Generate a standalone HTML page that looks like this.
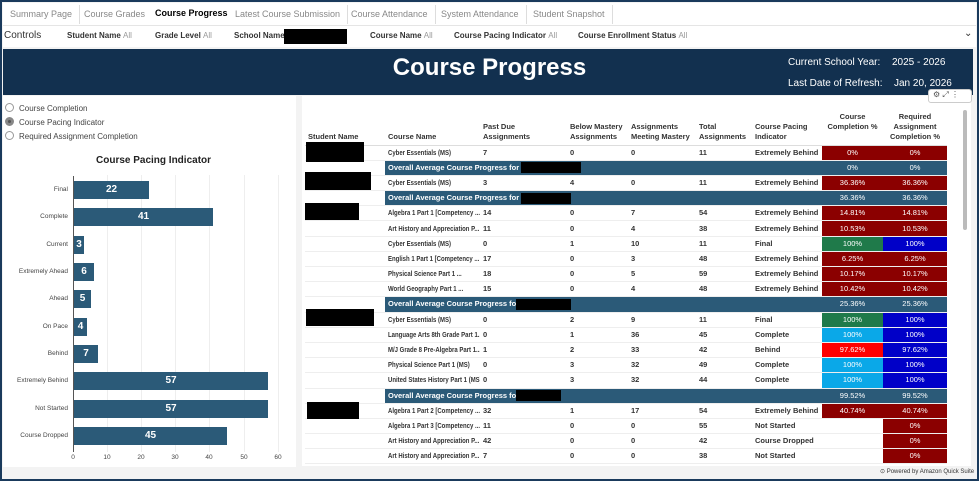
<!DOCTYPE html>
<html><head><style>
*{margin:0;padding:0;box-sizing:border-box}
body{width:979px;height:481px;overflow:hidden;font-family:"Liberation Sans",sans-serif;background:#1a3a5c;position:relative}
.a{position:absolute}
#frame{left:2px;top:2px;width:975px;height:477px;background:#f3f3f3}
.tab{top:5px;height:19px;font-size:9px;color:#888;line-height:19px;padding:0 7px;border-right:1px solid #ddd}
.ctl{top:31px;font-size:8px;font-weight:bold;color:#333}
.ctl span{font-weight:normal;color:#999}
.bar{background:#2b5a78;height:18px;color:#fff;font-size:10px;font-weight:bold;text-align:center;line-height:18px}
.lbl{font-size:6.5px;color:#444;text-align:right;width:68px;left:0}
.tk{font-size:6.5px;color:#444;top:454px;width:20px;text-align:center}
.grid{top:175px;height:277px;width:1px;background:#eee}
table{border-collapse:collapse;font-size:7.5px;font-weight:bold;color:#333;table-layout:fixed}
tr{height:15.2px}
td{line-height:14px;padding:0 3px;border-bottom:1px solid #eee;white-space:nowrap;overflow:hidden}
td.n span{display:inline-block;transform:scaleX(0.8);transform-origin:left center}
th{font-weight:bold;text-align:left;vertical-align:bottom;padding:0 3px 3px;font-size:7.5px;line-height:10px;border-bottom:1px solid #ddd;height:42px}
.avg td{background:#2b5a78;color:#fff}
.c{text-align:center;color:#fff;font-weight:normal}
.r{background:#8b0000}.g{background:#1f7a4a}.lb{background:#0aa8e8}.b{background:#0000c8}.rr{background:#f00}
.blk{background:#000}
</style></head><body>
<div class="a" id="frame"></div>
<div class="a" style="left:3px;top:3px;width:973px;height:22px;background:#fff"></div>
<div class="a tab" style="left:3px">Summary Page</div>
<div class="a tab" style="left:77px">Course Grades</div>
<div class="a tab" style="left:148px;background:#fff;color:#000;font-weight:bold;border:none;top:4px;height:21px">Course Progress</div>
<div class="a tab" style="left:228px">Latest Course Submission</div>
<div class="a tab" style="left:344px">Course Attendance</div>
<div class="a tab" style="left:434px">System Attendance</div>
<div class="a tab" style="left:526px">Student Snapshot</div>
<div class="a" style="left:3px;top:25px;width:973px;height:22px;background:#fff;border-top:1px solid #e5e5e5"></div>
<div class="a" style="left:4px;top:30px;font-size:10px;color:#333">Controls</div>
<div class="a ctl" style="left:67px">Student Name <span>All</span></div>
<div class="a ctl" style="left:155px">Grade Level <span>All</span></div>
<div class="a ctl" style="left:234px">School Name</div>
<div class="a blk" style="left:284px;top:29px;width:63px;height:15px"></div>
<div class="a ctl" style="left:370px">Course Name <span>All</span></div>
<div class="a ctl" style="left:454px">Course Pacing Indicator <span>All</span></div>
<div class="a ctl" style="left:578px">Course Enrollment Status <span>All</span></div>
<div class="a" style="left:964px;top:28px;font-size:10px;color:#333">&#8964;</div>
<div class="a" style="left:3px;top:49px;width:970px;height:46px;background:#12304f"></div>
<div class="a" style="left:0;width:979px;top:54px;text-align:center;color:#fff;font-size:24px;font-weight:bold">Course Progress</div>
<div class="a" style="left:788px;top:57px;color:#fff;font-size:10px">Current School Year:</div>
<div class="a" style="left:892px;top:57px;color:#fff;font-size:10px">2025 - 2026</div>
<div class="a" style="left:788px;top:78px;color:#fff;font-size:10px">Last Date of Refresh:</div>
<div class="a" style="left:894px;top:78px;color:#fff;font-size:10px">Jan 20, 2026</div>

<div class="a" style="left:3px;top:96px;width:293px;height:371px;background:#fff"></div>
<div class="a" style="left:5px;top:102px;font-size:8px;color:#444;line-height:14px">
<div><span style="display:inline-block;width:9px;height:9px;border:1px solid #999;border-radius:50%;vertical-align:-1px;margin-right:5px"></span>Course Completion</div>
<div><span style="display:inline-block;width:9px;height:9px;border:3px solid #888;background:#555;border-radius:50%;vertical-align:-1px;margin-right:5px"></span>Course Pacing Indicator</div>
<div><span style="display:inline-block;width:9px;height:9px;border:1px solid #999;border-radius:50%;vertical-align:-1px;margin-right:5px"></span>Required Assignment Completion</div></div>
<div class="a" style="left:96px;top:155px;font-size:10px;font-weight:bold;color:#222">Course Pacing Indicator</div>
<div class="a grid" style="left:107px"></div><div class="a grid" style="left:141px"></div><div class="a grid" style="left:175px"></div><div class="a grid" style="left:209px"></div><div class="a grid" style="left:244px"></div><div class="a grid" style="left:278px"></div>
<div class="a" style="left:73px;top:176px;width:1px;height:276px;background:#555"></div>
<div class="a tk" style="left:63px">0</div><div class="a tk" style="left:97px">10</div><div class="a tk" style="left:131px">20</div><div class="a tk" style="left:165px">30</div><div class="a tk" style="left:199px">40</div><div class="a tk" style="left:234px">50</div><div class="a tk" style="left:268px">60</div>
<div class="a lbl" style="top:186px">Final</div><div class="a bar" style="left:74px;top:181px;width:75px">22</div>
<div class="a lbl" style="top:213px">Complete</div><div class="a bar" style="left:74px;top:208px;width:139px">41</div>
<div class="a lbl" style="top:241px">Current</div><div class="a bar" style="left:74px;top:236px;width:10px">3</div>
<div class="a lbl" style="top:268px">Extremely Ahead</div><div class="a bar" style="left:74px;top:263px;width:20px">6</div>
<div class="a lbl" style="top:295px">Ahead</div><div class="a bar" style="left:74px;top:290px;width:17px">5</div>
<div class="a lbl" style="top:323px">On Pace</div><div class="a bar" style="left:74px;top:318px;width:13px">4</div>
<div class="a lbl" style="top:350px">Behind</div><div class="a bar" style="left:74px;top:345px;width:24px">7</div>
<div class="a lbl" style="top:377px">Extremely Behind</div><div class="a bar" style="left:74px;top:372px;width:194px">57</div>
<div class="a lbl" style="top:405px">Not Started</div><div class="a bar" style="left:74px;top:400px;width:194px">57</div>
<div class="a lbl" style="top:432px">Course Dropped</div><div class="a bar" style="left:74px;top:427px;width:153px">45</div>

<div class="a" style="left:302px;top:96px;width:669px;height:370px;background:#fff;overflow:hidden">
<table class="a" style="left:3px;top:7px;width:642px">
<colgroup><col style="width:80px"><col style="width:95px"><col style="width:87px"><col style="width:61px"><col style="width:68px"><col style="width:56px"><col style="width:70px"><col style="width:61px"><col style="width:64px"></colgroup>
<tr style="height:42px"><th>Student Name</th><th>Course Name</th><th>Past Due<br>Assignments</th><th>Below Mastery<br>Assignments</th><th>Assignments<br>Meeting Mastery</th><th>Total<br>Assignments</th><th>Course Pacing<br>Indicator</th><th style="text-align:center">Course<br>Completion %<br>&nbsp;</th><th style="text-align:center">Required<br>Assignment<br>Completion %</th></tr>
<tr><td></td><td class="n"><span>Cyber Essentials (MS)</span></td><td>7</td><td>0</td><td>0</td><td>11</td><td>Extremely Behind</td><td class="c r">0%</td><td class="c r">0%</td></tr>
<tr class="avg"><td style="background:#fff"></td><td colspan="6">Overall Average Course Progress for <span class="blk" style="display:inline-block;width:60px;height:11px;vertical-align:middle"></span></td><td class="c">0%</td><td class="c">0%</td></tr>
<tr><td></td><td class="n"><span>Cyber Essentials (MS)</span></td><td>3</td><td>4</td><td>0</td><td>11</td><td>Extremely Behind</td><td class="c r">36.36%</td><td class="c r">36.36%</td></tr>
<tr class="avg"><td style="background:#fff"></td><td colspan="6">Overall Average Course Progress for <span class="blk" style="display:inline-block;width:50px;height:11px;vertical-align:middle"></span></td><td class="c">36.36%</td><td class="c">36.36%</td></tr>
<tr><td></td><td class="n"><span>Algebra 1 Part 1 [Competency ...</span></td><td>14</td><td>0</td><td>7</td><td>54</td><td>Extremely Behind</td><td class="c r">14.81%</td><td class="c r">14.81%</td></tr>
<tr><td></td><td class="n"><span>Art History and Appreciation P...</span></td><td>11</td><td>0</td><td>4</td><td>38</td><td>Extremely Behind</td><td class="c r">10.53%</td><td class="c r">10.53%</td></tr>
<tr><td></td><td class="n"><span>Cyber Essentials (MS)</span></td><td>0</td><td>1</td><td>10</td><td>11</td><td>Final</td><td class="c g">100%</td><td class="c b">100%</td></tr>
<tr><td></td><td class="n"><span>English 1 Part 1 [Competency ...</span></td><td>17</td><td>0</td><td>3</td><td>48</td><td>Extremely Behind</td><td class="c r">6.25%</td><td class="c r">6.25%</td></tr>
<tr><td></td><td class="n"><span>Physical Science Part 1 ...</span></td><td>18</td><td>0</td><td>5</td><td>59</td><td>Extremely Behind</td><td class="c r">10.17%</td><td class="c r">10.17%</td></tr>
<tr><td></td><td class="n"><span>World Geography Part 1 ...</span></td><td>15</td><td>0</td><td>4</td><td>48</td><td>Extremely Behind</td><td class="c r">10.42%</td><td class="c r">10.42%</td></tr>
<tr class="avg"><td style="background:#fff"></td><td colspan="6">Overall Average Course Progress fo<span class="blk" style="display:inline-block;width:55px;height:11px;vertical-align:middle"></span></td><td class="c">25.36%</td><td class="c">25.36%</td></tr>
<tr><td></td><td class="n"><span>Cyber Essentials (MS)</span></td><td>0</td><td>2</td><td>9</td><td>11</td><td>Final</td><td class="c g">100%</td><td class="c b">100%</td></tr>
<tr><td></td><td class="n"><span>Language Arts 8th Grade Part 1...</span></td><td>0</td><td>1</td><td>36</td><td>45</td><td>Complete</td><td class="c lb">100%</td><td class="c b">100%</td></tr>
<tr><td></td><td class="n"><span>M/J Grade 8 Pre-Algebra Part 1...</span></td><td>1</td><td>2</td><td>33</td><td>42</td><td>Behind</td><td class="c rr">97.62%</td><td class="c b">97.62%</td></tr>
<tr><td></td><td class="n"><span>Physical Science Part 1 (MS)</span></td><td>0</td><td>3</td><td>32</td><td>49</td><td>Complete</td><td class="c lb">100%</td><td class="c b">100%</td></tr>
<tr><td></td><td class="n"><span>United States History Part 1 (MS)</span></td><td>0</td><td>3</td><td>32</td><td>44</td><td>Complete</td><td class="c lb">100%</td><td class="c b">100%</td></tr>
<tr class="avg"><td style="background:#fff"></td><td colspan="6">Overall Average Course Progress fo<span class="blk" style="display:inline-block;width:45px;height:11px;vertical-align:middle"></span></td><td class="c">99.52%</td><td class="c">99.52%</td></tr>
<tr><td></td><td class="n"><span>Algebra 1 Part 2 [Competency ...</span></td><td>32</td><td>1</td><td>17</td><td>54</td><td>Extremely Behind</td><td class="c r">40.74%</td><td class="c r">40.74%</td></tr>
<tr><td></td><td class="n"><span>Algebra 1 Part 3 [Competency ...</span></td><td>11</td><td>0</td><td>0</td><td>55</td><td>Not Started</td><td></td><td class="c r">0%</td></tr>
<tr><td></td><td class="n"><span>Art History and Appreciation P...</span></td><td>42</td><td>0</td><td>0</td><td>42</td><td>Course Dropped</td><td></td><td class="c r">0%</td></tr>
<tr><td></td><td class="n"><span>Art History and Appreciation P...</span></td><td>7</td><td>0</td><td>0</td><td>38</td><td>Not Started</td><td></td><td class="c r">0%</td></tr>
</table>
<div class="a blk" style="left:4px;top:46px;width:58px;height:20px"></div>
<div class="a blk" style="left:3px;top:76px;width:66px;height:18px"></div>
<div class="a blk" style="left:3px;top:107px;width:54px;height:17px"></div>
<div class="a blk" style="left:4px;top:213px;width:68px;height:17px"></div>
<div class="a blk" style="left:5px;top:306px;width:52px;height:17px"></div>
<div class="a" style="left:661px;top:14px;width:4px;height:120px;background:#bbb;border-radius:2px"></div>
</div>
<div class="a" style="left:928px;top:89px;width:44px;height:14px;background:#fff;border:1px solid #ccc;border-radius:3px;font-size:8px;color:#555;padding-left:4px">⚙ ⤢ ⋮</div>
<div class="a" style="left:880px;top:468px;font-size:6px;color:#333">⊙ Powered by Amazon Quick Suite</div>
</body></html>
